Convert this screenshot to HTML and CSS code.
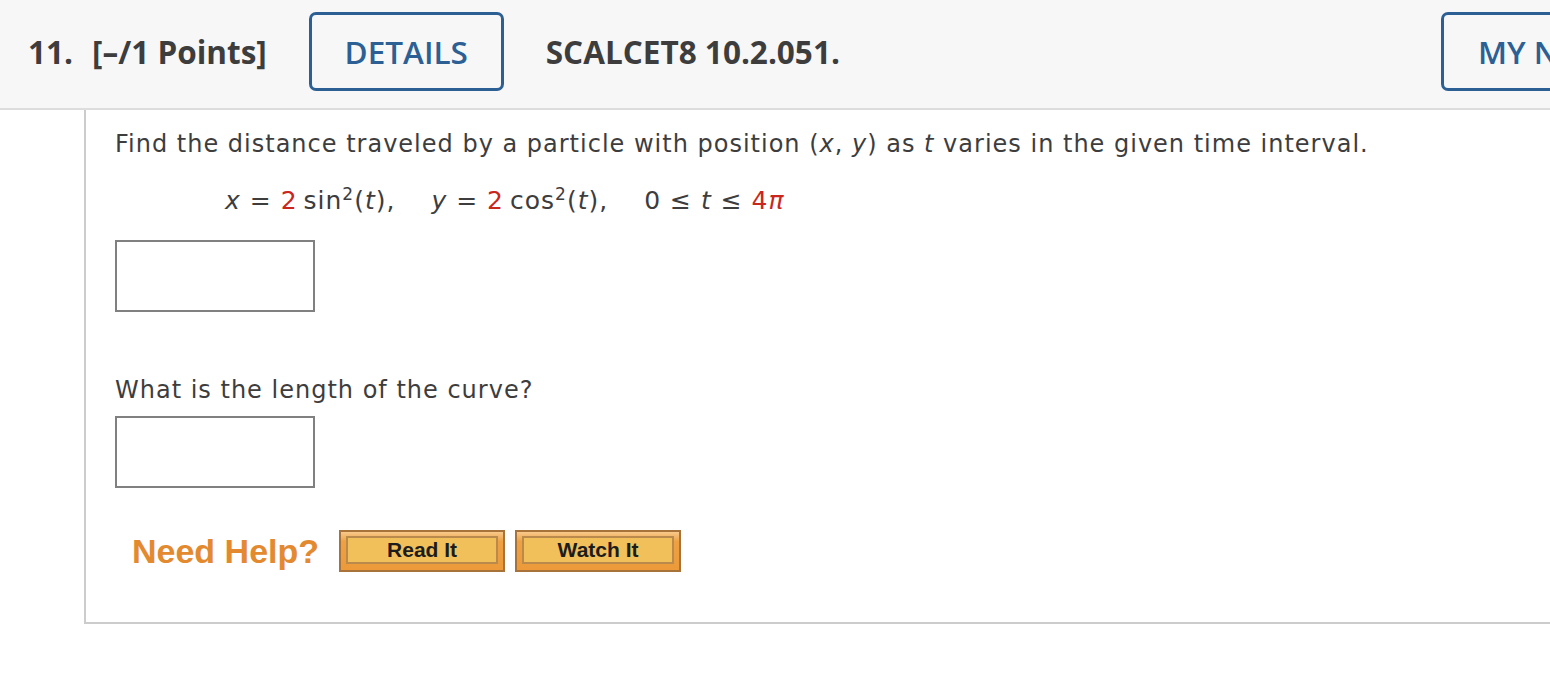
FILE: index.html
```html
<!DOCTYPE html>
<html>
	<head>
		<link rel="stylesheet" href="styles.css">
	</head>
	<body>

	<div class="q_header">
		<span class="q_num">11.</span>
		<span class="q_points">[&ndash;/1 Points]</span>
		<div class="q_btn">DETAILS</div>
		<span class="q_ref">SCALCET8 10.2.051.</span>
		<div class="q_btn q_notes">MY NOTES</div>
	</div>

	<div class="q_body">
		<p class="q_text">Find the distance traveled by a particle with position (<i>x</i>, <i>y</i>) as <i>t</i> varies in the given time interval.</p>
		<div class="formula">
			<span><i>x</i> = <span class="red">2</span>&thinsp;sin<sup>2</sup>(<i>t</i>),</span>
			<span><i>y</i> = <span class="red">2</span>&thinsp;cos<sup>2</sup>(<i>t</i>),</span>
			<span>0 &le; <i>t</i> &le; <span class="red">4<i>&pi;</i></span></span>
		</div>
		<input class="answer" type="text">

		<p class="q_text q_second">What is the length of the curve?</p>
		<input class="answer" type="text">

		<div class="help_row">
			<span class="need_help">Need Help?</span>
			<div class="help_btn"><span>Read It</span></div>
			<div class="help_btn"><span>Watch It</span></div>
		</div>
	</div>

	</body>
</html>
```

FILE: styles.css
```css
body{
	margin: 0;
	background: #fff;
}

.q_header{
	display: flex;
	align-items: center;
	box-sizing: border-box;
	height: 110px;
	padding: 0 0 6px 28px;
	background: #f7f7f7;
	border-bottom: 2px solid #dddddd;
	overflow: hidden;
	white-space: nowrap;
	font-family: "Open Sans", sans-serif;
	color: #3d3d3d;
}
.q_num{
	font-size: 31.5px;
	font-weight: 700;
}
.q_points{
	font-size: 31.5px;
	font-weight: 700;
	margin-left: 19px;
}
.q_btn{
	flex-shrink: 0;
	box-sizing: border-box;
	width: 195px;
	height: 79px;
	margin-left: 42px;
	border: 3px solid #2c6095;
	border-radius: 7px;
	color: #2c6095;
	font-size: 31.5px;
	font-weight: 600;
	line-height: 73px;
	text-align: center;
}
.q_ref{
	margin-left: 42px;
	font-size: 31.5px;
	font-weight: 700;
}
.q_notes{
	margin-left: auto;
	margin-right: -86px;
	width: 195px;
	padding-left: 34px;
	text-align: left;
	overflow: hidden;
}

.q_body{
	margin-left: 84px;
	height: 514px;
	box-sizing: border-box;
	padding: 19px 0 0 29px;
	border-left: 2px solid #cccccc;
	border-bottom: 2px solid #cccccc;
	font-family: "DejaVu Sans", Verdana, sans-serif;
	font-size: 24px;
	letter-spacing: 1px;
	color: #3d3d3d;
}
.q_text{
	margin: 0;
	line-height: 30px;
}
.formula{
	display: flex;
	gap: 36px;
	margin: 27px 0 0 110px;
	font-size: 25px;
	line-height: 30px;
	color: #3d3d3d;
}
.formula sup{
	font-size: 17px;
	line-height: 0;
}
.red{
	color: #c9261d;
}
.answer{
	display: block;
	box-sizing: border-box;
	width: 200px;
	height: 72px;
	margin: 24px 0 0 0;
	border: 2px solid #808080;
	border-radius: 0;
	padding: 0;
	background: #fff;
}
.q_second{
	margin-top: 63px;
}
.q_second + .answer{
	margin-top: 11px;
}

.help_row{
	display: flex;
	align-items: center;
	margin: 42px 0 0 17px;
	letter-spacing: 0;
}
.need_help{
	font-family: "Liberation Sans", Arial, sans-serif;
	font-size: 34px;
	font-weight: 700;
	color: #e38a30;
	margin-right: 20px;
}
.help_btn{
	box-sizing: border-box;
	width: 166px;
	height: 42px;
	margin-right: 10px;
	padding: 4px 5px 6px;
	border: 2px solid #a8733a;
	background: linear-gradient(#f7c98b, #eea143 25%, #ec9a3a);
}
.help_btn span{
	display: block;
	height: 100%;
	box-sizing: border-box;
	border: 2px solid #b98a4c;
	background: #f2c05b;
	font-family: "Liberation Sans", Arial, sans-serif;
	font-size: 21px;
	font-weight: 700;
	line-height: 24px;
	text-align: center;
	color: #1c1c1c;
}
```
